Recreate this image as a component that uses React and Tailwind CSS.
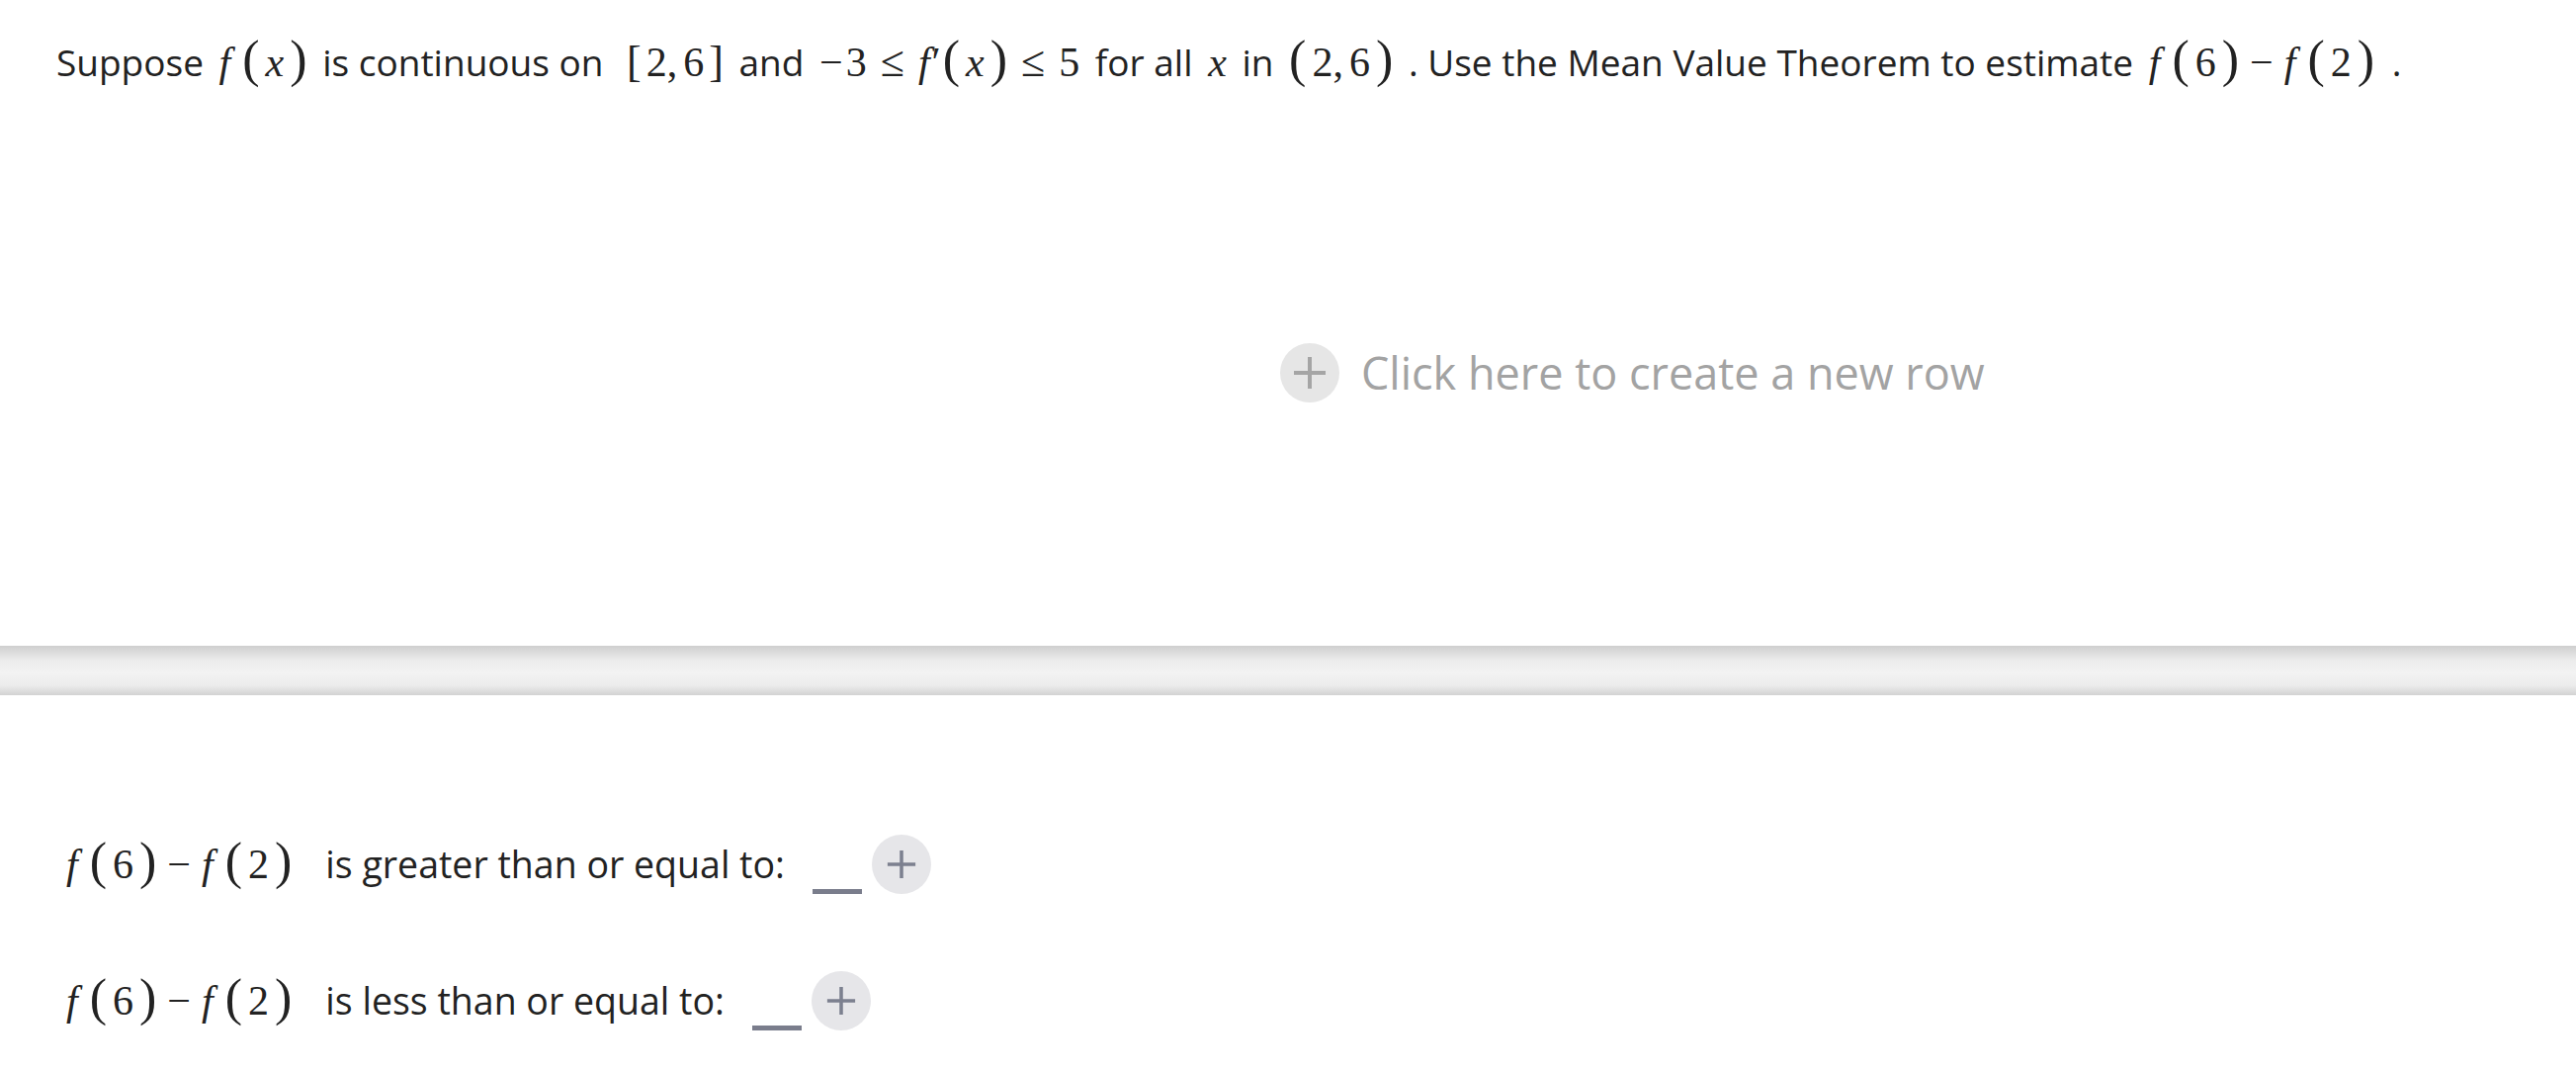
import React from 'react';

function Math({ children, className = 'mx-[6px]' }) {
  return (
    <span className={`font-[family-name:'Liberation_Serif',serif] text-[42px] text-[#222] ${className}`}>
      {children}
    </span>
  );
}

function V({ children }) {
  return <span className="italic">{children}</span>;
}

function Paren({ children, gap = 'ml-[12px]' }) {
  return (
    <span className={gap}>
      <span className="text-[52px] leading-none">(</span>
      <span className="mx-[6px]">{children}</span>
      <span className="text-[52px] leading-none">)</span>
    </span>
  );
}

function FofArg({ arg, italicArg = false }) {
  return (
    <>
      <V>f</V>
      <Paren>{italicArg ? <V>{arg}</V> : arg}</Paren>
    </>
  );
}

function Diff() {
  return (
    <>
      <FofArg arg="6" />
      <span className="mx-[11px]">−</span>
      <FofArg arg="2" />
    </>
  );
}

function Leq() {
  return <span className="text-[44px] mx-[14px]">≤</span>;
}

function PlusCircle({ dark = false }) {
  return (
    <button
      className={`w-[60px] h-[60px] rounded-full flex items-center justify-center ${
        dark ? 'bg-[#e6e6e9]' : 'bg-[#e6e6e6]'
      }`}
    >
      <svg width={dark ? 30 : 34} height={dark ? 30 : 34} viewBox="0 0 34 34">
        <path
          d="M17 1 V33 M1 17 H33"
          stroke={dark ? '#7c808f' : '#a5a5a5'}
          strokeWidth={4}
          fill="none"
        />
      </svg>
    </button>
  );
}

function AnswerRow({ label }) {
  return (
    <div className="flex items-center h-[60px]">
      <Math className="mx-0">
        <Diff />
      </Math>
      <span className="ml-[34px] text-[37.5px]">{label}</span>
      <div className="self-end ml-[28px] w-[50px] h-[5px] bg-[#7a7d8c]" />
      <div className="ml-[10px]">
        <PlusCircle dark />
      </div>
    </div>
  );
}

export default function App() {
  return (
    <div className="min-h-screen bg-white text-[#222] font-[family-name:'Open_Sans',sans-serif]">
      <div className="h-[653px] flex flex-col">
        <div className="pt-[34px] pl-[57px] text-[37px] whitespace-nowrap leading-[58px]">
          Suppose{' '}
          <Math>
            <FofArg arg="x" italicArg />
          </Math>{' '}
          is continuous on{' '}
          <Math className="ml-[14px] mr-[6px]">
            <span className="text-[44px]">[</span>
            <span className="mx-[5px]">
              2<span className="mr-[6px]">,</span>6
            </span>
            <span className="text-[44px]">]</span>
          </Math>{' '}
          and{' '}
          <Math>
            <span className="mr-[3px]">−</span>3
            <Leq />
            <V>f</V>
            <span className="ml-[2px] mr-[2px]">′</span>
            <Paren gap="ml-0">
              <V>x</V>
            </Paren>
            <Leq />5
          </Math>{' '}
          for all{' '}
          <Math>
            <V>x</V>
          </Math>{' '}
          in{' '}
          <Math>
            <Paren gap="ml-0">
              2<span className="mr-[6px]">,</span>6
            </Paren>
          </Math>{' '}
          . Use the Mean Value Theorem to estimate{' '}
          <Math className="ml-[6px] mr-[8px]">
            <Diff />
          </Math>{' '}
          .
        </div>

        <div className="mt-[251px] pl-[1295px] flex items-center gap-[22px]">
          <PlusCircle />
          <span className="text-[45px] text-[#a3a3a3]">Click here to create a new row</span>
        </div>
      </div>

      <div className="h-[50px] bg-[linear-gradient(to_bottom,#cfcfcf,#ececec_30%,#f3f3f3_55%,#ececec_80%,#d2d2d2)]" />

      <div className="pt-[141px] pl-[67px] flex flex-col gap-[78px]">
        <AnswerRow label="is greater than or equal to:" />
        <AnswerRow label="is less than or equal to:" />
      </div>
    </div>
  );
}
